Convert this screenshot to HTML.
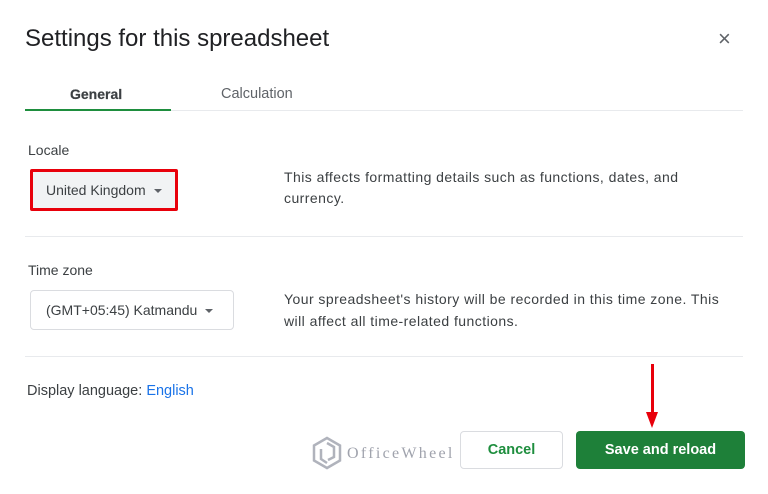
<!DOCTYPE html>
<html><head><meta charset="utf-8"><style>
*{margin:0;padding:0;box-sizing:border-box}
body{width:768px;height:494px;background:#fff;font-family:"Liberation Sans",Arial,sans-serif;position:relative;overflow:hidden;color:#3c4043}
.a{position:absolute}
.t{font-size:14px;color:#3c4043}
.d{letter-spacing:0.45px;white-space:nowrap}
.sel{position:absolute;border:1px solid #dadce0;border-radius:4px;font-size:14px;color:#3c4043;padding-left:15px;line-height:38px}
.car{display:inline-block;width:0;height:0;border-left:4px solid transparent;border-right:4px solid transparent;border-top:4px solid #5f6368;vertical-align:middle;margin-left:8px}
hr{position:absolute;border:0;border-top:1px solid #e8eaed;left:25px;width:718px}
</style></head><body>
<div class="a" style="left:25px;top:25px;font-size:24px;color:#202124">Settings for this spreadsheet</div>
<div class="a" style="left:718px;top:26px;font-size:22px;color:#5f6368">×</div>
<div class="a" style="left:70px;top:86px;font-size:14px;color:#3c4043;font-weight:600;-webkit-text-stroke:0.2px #3c4043">General</div>
<div class="a" style="left:221px;top:86px;font-size:14.5px;color:#5f6368">Calculation</div>
<hr style="top:110px">
<div class="a" style="left:25px;top:109px;width:146px;height:2px;background:#1e8e3e"></div>
<div class="a t" style="left:28px;top:142px">Locale</div>
<div class="sel" style="left:30px;top:169px;width:148px;height:42px;background:#f1f3f4;border:3px solid #e8000b;border-radius:2px;line-height:36px;padding-left:13px">United Kingdom<span class="car"></span></div>
<div class="a t d" style="left:284px;top:167px;line-height:21px">This affects formatting details such as functions, dates, and<br>currency.</div>
<hr style="top:236px">
<div class="a t" style="left:28px;top:262px">Time zone</div>
<div class="sel" style="left:30px;top:290px;width:204px;height:40px">(GMT+05:45) Katmandu<span class="car"></span></div>
<div class="a t d" style="left:284px;top:288px;line-height:22px">Your spreadsheet's history will be recorded in this time zone. This<br>will affect all time-related functions.</div>
<hr style="top:356px">
<div class="a" style="left:27px;top:383px;font-size:14.5px">Display language: <span style="color:#1a73e8">English</span></div>
<svg class="a" style="left:312px;top:436px" width="30" height="34" viewBox="0 0 30 34"><path d="M15 2L28 9.5V24.5L15 32L2 24.5V9.5Z M9 13V23L15 27 M15 7L22 11V21L16 24" fill="none" stroke="#b0b3bc" stroke-width="2.5"/></svg>
<div class="a" style="left:347px;top:445px;font-family:'Liberation Serif',serif;font-size:16px;letter-spacing:2.3px;color:#a0a3ad">OfficeWheel</div>
<div class="a" style="left:460px;top:431px;width:103px;height:38px;border:1px solid #dadce0;border-radius:4px;text-align:center;line-height:36px;font-size:14.5px;font-weight:600;color:#1e8e3e">Cancel</div>
<div class="a" style="left:576px;top:431px;width:169px;height:38px;border-radius:4px;background:#1e8039;text-align:center;line-height:38px;font-size:14.5px;font-weight:600;color:#fff">Save and reload</div>
<div class="a" style="left:651px;top:364px;width:3px;height:52px;background:#e8000b"></div>
<div class="a" style="left:646px;top:412px;width:0;height:0;border-left:6.5px solid transparent;border-right:6.5px solid transparent;border-top:16px solid #e8000b"></div>
</body></html>
